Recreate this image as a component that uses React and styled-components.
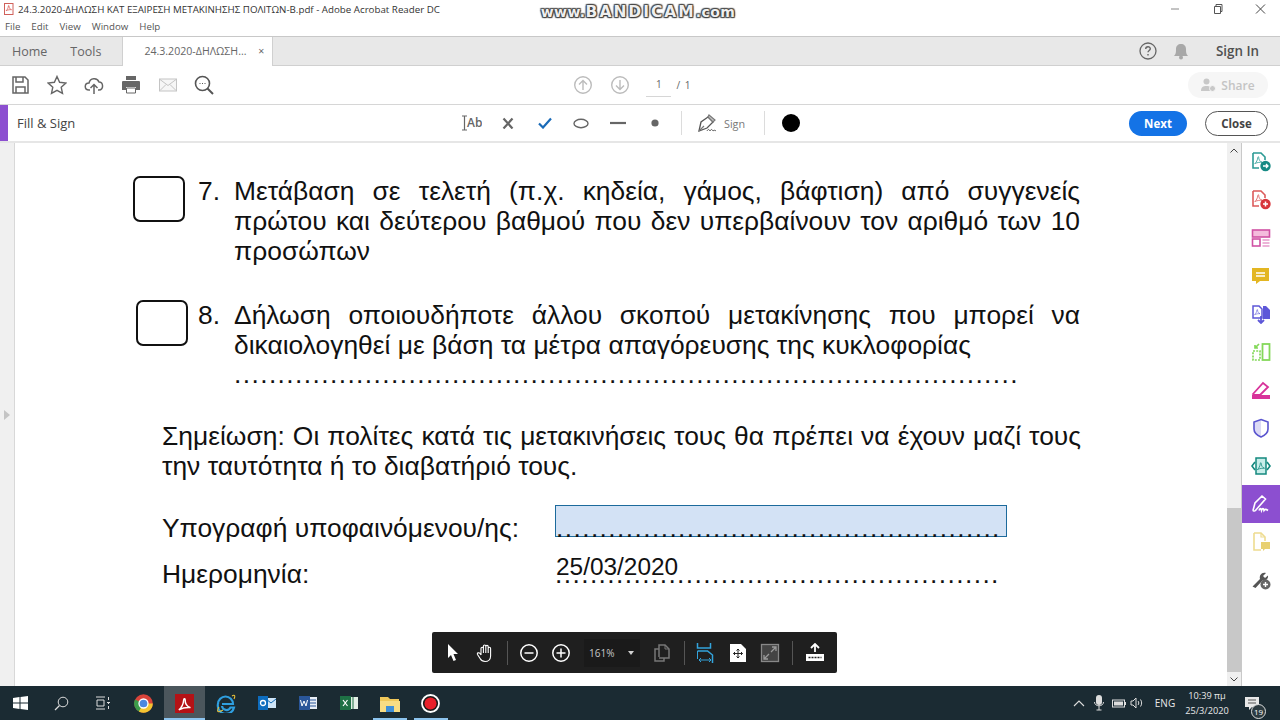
import React from 'react';
import styled, { createGlobalStyle } from 'styled-components';

const GlobalStyle = createGlobalStyle`
  html, body { margin: 0; padding: 0; height: 100%; overflow: hidden; background: #fff; }
  #root { height: 720px; }
  * { box-sizing: border-box; }
  svg { display: block; }
`;

const uiFont = `"Open Sans", "Noto Sans", sans-serif`;
const docFont = `"Liberation Sans", Arial, sans-serif`;

const Screen = styled.div`
  position: relative;
  width: 1280px;
  height: 720px;
  display: flex;
  flex-direction: column;
  overflow: hidden;
  font-family: ${uiFont};
  color: #444;
`;

/* title + menu */
const TitleBar = styled.div`
  height: 18px;
  display: flex;
  align-items: center;
  padding-left: 4px;
  gap: 4px;
  font-size: 9.75px;
  color: #333;
`;
const TitleText = styled.span`
  flex: 1;
  white-space: nowrap;
`;
const WinBtn = styled.div`
  width: 39px;
  display: flex;
  justify-content: center;
`;
const MenuBar = styled.div`
  height: 19px;
  display: flex;
  align-items: center;
  gap: 11px;
  padding: 0 0 1px 5px;
  font-size: 9.7px;
  color: #555;
  border-bottom: 1px solid #c8c8c8;
`;

/* tabs */
const TabBar = styled.div`
  height: 29px;
  display: flex;
  align-items: center;
  background: #e8e8e8;
  border-bottom: 1px solid #d0d0d0;
  font-size: 12.5px;
  color: #666;
`;
const NavTab = styled.span`
  margin-left: ${(p) => p.$ml}px;
`;
const DocTab = styled.div`
  width: 151px;
  height: 29px;
  margin-left: 21px;
  padding: 0 8px 0 21px;
  display: flex;
  align-items: center;
  justify-content: space-between;
  background: #fff;
  border-left: 1px solid #d0d0d0;
  border-right: 1px solid #d0d0d0;
  font-size: 10.6px;
  white-space: nowrap;
  color: #666;
`;
const TabRight = styled.div`
  margin-left: auto;
  display: flex;
  align-items: center;
  padding-right: 21px;
  gap: 16px;
`;
const SignIn = styled.span`
  margin-left: 11px;
  font-size: 13.4px;
  font-weight: 600;
  color: #505050;
`;

/* main toolbar */
const ToolBar = styled.div`
  height: 39px;
  display: flex;
  align-items: center;
  padding-left: 2px;
  border-bottom: 1px solid #d6d6d6;
`;
const ToolCell = styled.div`
  width: ${(p) => p.$w || 36.8}px;
  margin-left: ${(p) => p.$ml || 0}px;
  display: flex;
  justify-content: center;
`;
const PageBox = styled.div`
  width: 25px;
  margin-left: 8px;
  height: 23px;
  line-height: 21px;
  text-align: center;
  font-size: 10px;
  color: #666;
  border-bottom: 1px solid #d6d6d6;
`;
const PageTotal = styled.span`
  margin-left: 5px;
  font-size: 10px;
  word-spacing: 2px;
  color: #666;
`;
const ShareBtn = styled.div`
  margin-left: auto;
  margin-right: 12px;
  width: 80px;
  height: 26px;
  border-radius: 13px;
  background: #f6f6f6;
  display: flex;
  align-items: center;
  justify-content: center;
  gap: 5px;
  font-size: 12px;
  font-weight: 600;
  color: #c4c4c4;
`;

/* fill and sign */
const FillBar = styled.div`
  height: 38px;
  display: flex;
  align-items: center;
  border-bottom: 2px solid #e6e6e6;
  box-shadow: inset 8px 0 0 #8c4fd0;
`;
const FillTitle = styled.span`
  width: 443px;
  padding-left: 17px;
  font-size: 13px;
  font-weight: 500;
  color: #444;
`;
const Divider = styled.div`
  width: 1px;
  height: 24px;
  margin: 0 ${(p) => p.$gap || 0}px;
  background: ${(p) => p.$color || '#dcdcdc'};
`;
const SignLabel = styled.span`
  width: 40px;
  font-size: 10.8px;
  color: #777;
`;
const ColorDot = styled.div`
  width: 18px;
  height: 18px;
  margin-left: 17px;
  border-radius: 50%;
  background: #000;
`;
const PillBtn = styled.div`
  height: 25px;
  display: flex;
  align-items: center;
  justify-content: center;
  border-radius: 13px;
  font-size: 11.5px;
  font-weight: 700;
`;
const NextBtn = styled(PillBtn)`
  width: 58px;
  margin-left: auto;
  background: #1473e6;
  color: #fff;
`;
const CloseBtn = styled(PillBtn)`
  width: 63px;
  margin: 0 12px 0 18px;
  border: 1px solid #555;
  color: #444;
`;

/* body */
const Body = styled.div`
  flex: 1;
  min-height: 0;
  display: flex;
`;
const SideStrip = styled.div`
  width: 15px;
  display: flex;
  align-items: center;
  padding: 0 0 0 4px;
  background: #f0f0f0;
  border-right: 1px solid #d8d8d8;
`;
const Page = styled.div`
  flex: 1;
  padding: 33px 0 0 118px;
  background: #fff;
  font-family: ${docFont};
  color: #111;
  font-size: 26.4px;
  line-height: 30px;
`;
const Item = styled.div`
  display: grid;
  grid-template-columns: 65px 36px 846px;
  margin-bottom: ${(p) => p.$mb}px;
`;
const CheckBox = styled.div`
  width: 52px;
  height: ${(p) => p.$h}px;
  margin-left: ${(p) => p.$ml || 0}px;
  border: 2px solid #111;
  border-radius: 7px;
`;
const Justified = styled.div`
  text-align: justify;
`;
const Dots = styled.div`
  height: ${(p) => p.$h}px;
  width: ${(p) => p.$w}px;
  margin-top: ${(p) => p.$mt || 0}px;
  white-space: nowrap;
  letter-spacing: 1.39px;
  line-height: ${(p) => p.$lh}px;
  color: #111;
`;
const Note = styled.div`
  width: 919px;
  margin: 21px 0 0 29px;
  text-align: justify;
`;
const SignRow = styled.div`
  display: grid;
  grid-template-columns: 393px 452px;
  margin: 24px 0 0 29px;
  align-items: start;
`;
const DateRow = styled(SignRow)`
  margin-top: 11px;
  align-items: end;
`;
const RowLabel = styled.div`
  padding-top: ${(p) => p.$pt || 0}px;
  white-space: nowrap;
`;
const SignField = styled.div`
  height: 32px;
  display: flex;
  align-items: flex-end;
  background: #d3e2f5;
  border: 1px solid #1c6a9c;
`;
const DateField = styled.div`
  padding-left: 1px;
  line-height: 26px;
  font-size: 24.4px;
`;

/* scrollbar */
const ScrollBar = styled.div`
  width: 15px;
  display: flex;
  flex-direction: column;
  align-items: center;
  background: #f0f0f0;
  border-right: 1px solid #c9c9c9;
`;
const ScrollArrow = styled.div`
  height: 14px;
  display: flex;
  align-items: center;
`;
const ScrollTrack = styled.div`
  flex: 1;
  width: 100%;
  padding-top: 351px;
  display: flex;
`;
const ScrollThumb = styled.div`
  flex: 1;
  background: #c8c8c8;
`;

/* right rail */
const Rail = styled.div`
  width: 38px;
  display: flex;
  flex-direction: column;
  background: #fff;
`;
const RailItem = styled.div`
  height: 38px;
  display: flex;
  align-items: center;
  justify-content: center;
  background: ${(p) => (p.$active ? '#8c4fd0' : 'transparent')};
`;

/* floating page controls */
const FloatBar = styled.div`
  position: absolute;
  left: 432px;
  top: 632px;
  width: 405px;
  height: 41px;
  display: flex;
  align-items: center;
  padding-left: 5px;
  background: #1f1f1f;
  border-radius: 2px;
`;
const FloatCell = styled.div`
  width: 32px;
  display: flex;
  justify-content: center;
`;
const ZoomValue = styled.div`
  width: 56px;
  margin: 0 6px 0 7px;
  height: 28px;
  display: flex;
  align-items: center;
  justify-content: space-between;
  padding: 0 6px 0 5px;
  background: #1a1a1a;
  font-size: 10px;
  color: #c8c8c8;
`;
const Caret = styled.div`
  width: 0;
  height: 0;
  border-left: 3px solid transparent;
  border-right: 3px solid transparent;
  border-top: 4px solid #d0d0d0;
`;

/* watermark */
const Watermark = styled.div`
  position: absolute;
  left: 530px;
  top: 2px;
  width: 216px;
  text-align: center;
  font-family: "DejaVu Sans", sans-serif;
  font-size: 15.5px;
  line-height: 21px;
  font-weight: 700;
  letter-spacing: 2px;
  white-space: nowrap;
  color: #efefef;
  text-shadow: 0 0 1px #333, 0 0 2px #333, 1px 1px 1px #444, -1px -1px 1px #555, 1px -1px 1px #555, -1px 1px 1px #555;
`;
const WatermarkSmall = styled.span`
  font-size: 14px;
  letter-spacing: 0.4px;
`;

/* taskbar */
const TaskBar = styled.div`
  height: 34px;
  display: flex;
  align-items: stretch;
  background: #1b2b33;
  color: #e8e8e8;
`;
const TaskCell = styled.div`
  width: 41px;
  display: flex;
  align-items: center;
  justify-content: center;
  background-color: ${(p) => (p.$active ? '#4b565c' : 'transparent')};
  background-image: ${(p) => (p.$open ? 'linear-gradient(#8cc4ee, #8cc4ee)' : 'none')};
  background-repeat: no-repeat;
  background-position: center bottom;
  background-size: ${(p) => p.$open || 0}px 2px;
`;
const Tray = styled.div`
  margin-left: auto;
  display: flex;
  align-items: center;
`;
const TrayCell = styled.div`
  width: ${(p) => p.$w}px;
  padding-left: ${(p) => p.$pl || 0}px;
  display: flex;
  justify-content: center;
  font-size: ${(p) => p.$fs || 10}px;
`;
const Clock = styled.div`
  width: 58px;
  text-align: center;
  font-size: 9.2px;
  line-height: 15px;
  white-space: nowrap;
`;
const NotifyWrap = styled.div`
  position: relative;
  width: 44px;
  padding-left: 9px;
`;
const NotifyBadge = styled.div`
  position: absolute;
  left: 15px;
  top: 7px;
  width: 15px;
  height: 15px;
  border-radius: 50%;
  background: #2c3a40;
  border: 1px solid #ddd;
  text-align: center;
  font-size: 8px;
  line-height: 13px;
  color: #fff;
`;

const PdfGlyph = ({ x = 0, y = 0, s = 1, color = '#fff', w = 1 }) => (
  <path
    transform={`translate(${x} ${y}) scale(${s})`}
    d="M1 9.500C3 8 4.500 5 4.800 1.600 5 .6 5.900 .7 5.900 1.700 5.800 4.500 7.500 7 10 7.800 8 7.600 4 8 1 9.500Z"
    fill="none"
    stroke={color}
    strokeWidth={w}
  />
);

const Svg = ({ w = 20, h = 20, vb, children }) => (
  <svg width={w} height={h} viewBox={vb || `0 0 ${w} ${h}`} fill="none">
    {children}
  </svg>
);

const RAIL_ICONS = [
  <Svg key="export">
    <path d="M2 1h8l4 4v3M2 1v15h6" stroke="#2b9a94" strokeWidth="1.600" />
    <PdfGlyph x={3} y={4} s={0.8} color="#2b9a94" />
    <circle cx="14.500" cy="14" r="5.200" fill="#168a84" />
    <path d="M12 14h5M15 12l2 2-2 2" stroke="#fff" strokeWidth="1.300" />
  </Svg>,
  <Svg key="create">
    <path d="M2 1h8l4 4v3M2 1v15h6" stroke="#dc5a5a" strokeWidth="1.600" />
    <PdfGlyph x={3} y={4} s={0.8} color="#dc5a5a" />
    <circle cx="14.500" cy="14" r="5.200" fill="#d8353b" />
    <path d="M12 14h5M14.500 11.500v5" stroke="#fff" strokeWidth="1.500" />
  </Svg>,
  <Svg key="edit">
    <rect x="1.500" y="2" width="17" height="7" fill="#f4bcdc" stroke="#d052a4" strokeWidth="1.600" />
    <rect x="1.500" y="11" width="7.500" height="7" stroke="#d052a4" strokeWidth="1.600" />
    <path d="M11.500 12h7M11.500 15h7M11.500 18h7" stroke="#e79acb" strokeWidth="1.300" />
  </Svg>,
  <Svg key="comment">
    <path d="M1 2h17v13H9l-4 3v-3H1z" fill="#e3b622" />
    <path d="M5 7h9M5 10h9" stroke="#fff" strokeWidth="1.400" />
  </Svg>,
  <Svg key="combine">
    <path d="M2 2h6l3 3v9H2z" fill="#fff" stroke="#5d57d8" strokeWidth="1.500" />
    <path d="M12 2h3l4 4v9h-7z" fill="#5d57d8" />
    <PdfGlyph x={3} y={5} s={0.6} color="#5d57d8" />
    <path d="M10 12v7M7 16l3 3 3-3" stroke="#5d57d8" strokeWidth="1.800" />
  </Svg>,
  <Svg key="organize">
    <rect x="11.500" y="2" width="7" height="16" stroke="#84d85a" strokeWidth="1.800" />
    <path d="M2 9h7v9H2z" stroke="#84d85a" strokeWidth="1.700" strokeDasharray="2 1.200" />
    <path d="M8 2L4 6M4 3v3h3" stroke="#84d85a" strokeWidth="1.700" />
  </Svg>,
  <Svg key="redact">
    <path d="M2 14L12 3l5 4-8 8H3z" fill="#fff" stroke="#d8329a" strokeWidth="1.800" />
    <rect x="1" y="15" width="18" height="4" fill="#d8329a" />
  </Svg>,
  <Svg key="protect">
    <path d="M10 2v17c-3.500-1.500-7-4-7-8V4z" fill="#dcdaf5" />
    <path d="M10 1.500l7 2.500v7c0 4-3.500 6.500-7 8-3.500-1.500-7-4-7-8V4z" stroke="#5a55cf" strokeWidth="1.600" />
  </Svg>,
  <Svg key="compress">
    <path d="M5 2h10v16H5z" fill="#c8eeea" stroke="#14897f" strokeWidth="1.500" />
    <path d="M4 6l-3 4 3 4M16 6l3 4-3 4" stroke="#14897f" strokeWidth="1.600" />
    <PdfGlyph x={5.500} y={6} s={0.8} color="#14897f" />
  </Svg>,
  <Svg key="sign">
    <path d="M2 16.500L4 9l7-7 3.500 3-7 8-3 3.500c-1 1-2.500 .5-2.500-.5z" stroke="#fff" strokeWidth="1.600" />
    <path d="M8 16.500c1-2.500 2-2.500 2.500 0 1-2.500 2-2.500 2.500 0 1-1.500 2-1.500 4 0" stroke="#fff" strokeWidth="1.600" />
  </Svg>,
  <Svg key="review">
    <path d="M3 1h7l4 4v4M3 1v17h7" stroke="#eedc90" strokeWidth="1.600" />
    <path d="M10 1v4h4" stroke="#eedc90" strokeWidth="1.200" />
    <path d="M10 10h9v7h-5l-2 2v-2h-2z" fill="#e8d070" />
  </Svg>,
  <Svg key="more">
    <path d="M1.500 16.500L9 9c-1-4 2-7.500 6-6l-3 3 2 2 3-2.500c.5 3-2 6-5.500 5l-7 7.500z" fill="#555" />
    <circle cx="14.500" cy="14.500" r="5" fill="#666" />
    <path d="M12 14.500h5M14.500 12v5" stroke="#fff" strokeWidth="1.400" />
  </Svg>,
];

const App = () => (
  <Screen>
    <GlobalStyle />
    <TitleBar>
      <Svg w={10} h={12}>
        <rect x=".5" y=".5" width="8.500" height="11" fill="#fff" stroke="#d0605a" />
        <PdfGlyph x={1.500} y={2} s={0.6} color="#d0302a" />
      </Svg>
      <TitleText>24.3.2020-ΔΗΛΩΣΗ ΚΑΤ ΕΞΑΙΡΕΣΗ ΜΕΤΑΚΙΝΗΣΗΣ ΠΟΛΙΤΩΝ-Β.pdf - Adobe Acrobat Reader DC</TitleText>
      <WinBtn><Svg w={10} h={10}><path d="M1 5h8" stroke="#888" /></Svg></WinBtn>
      <WinBtn><Svg w={10} h={10}><path d="M1.500 2.500h6v7h-6zM3 2.500v-2h6v7H7.500" stroke="#555" /></Svg></WinBtn>
      <WinBtn><Svg w={11} h={10}><path d="M1 .5l9 9M10 .5l-9 9" stroke="#444" /></Svg></WinBtn>
    </TitleBar>
    <MenuBar>
      <span>File</span><span>Edit</span><span>View</span><span>Window</span><span>Help</span>
    </MenuBar>

    <TabBar>
      <NavTab $ml={12}>Home</NavTab>
      <NavTab $ml={23}>Tools</NavTab>
      <DocTab>
        <span>24.3.2020-ΔΗΛΩΣΗ...</span>
        <span>×</span>
      </DocTab>
      <TabRight>
        <Svg w={18} h={18}>
          <circle cx="9" cy="9" r="8" stroke="#666" strokeWidth="1.300" />
          <path d="M6.700 7c0-3 4.600-3 4.600-.2 0 1.700-2.300 1.700-2.300 3.500M9 12v1.500" stroke="#666" strokeWidth="1.400" />
        </Svg>
        <Svg w={16} h={18}>
          <path d="M1 14c2-2 2-4 2-7 0-3 2-5 5-5s5 2 5 5c0 3 0 5 2 7z" fill="#a8a8a8" />
          <circle cx="8" cy="15.500" r="2" fill="#a8a8a8" />
        </Svg>
        <SignIn>Sign In</SignIn>
      </TabRight>
    </TabBar>

    <ToolBar>
      <ToolCell>
        <Svg>
          <path d="M3 2h12l3 3v13H3z" stroke="#666" strokeWidth="1.500" />
          <path d="M6 2v5h7V2M6 18v-6h9v6" stroke="#666" strokeWidth="1.500" />
        </Svg>
      </ToolCell>
      <ToolCell>
        <Svg>
          <path d="M10 1.500l2.600 5.800 6.300.7-4.700 4.200 1.300 6.200L10 15.300l-5.500 3.100 1.300-6.200L1.100 8l6.300-.7z" stroke="#666" strokeWidth="1.400" />
        </Svg>
      </ToolCell>
      <ToolCell>
        <Svg>
          <path d="M6 15H5c-5 0-5-7 0-7 1-5 8-6 10-1 4.500 0 5 8 0 8h-1" stroke="#666" strokeWidth="1.500" />
          <path d="M10 19v-9M6.500 13L10 9.500l3.500 3.500" stroke="#666" strokeWidth="1.500" />
        </Svg>
      </ToolCell>
      <ToolCell>
        <Svg>
          <path d="M5 1h10v4H5z" fill="#666" />
          <path d="M2 6h16c1 0 1 1 1 1v8h-4v-3H5v3H1V7s0-1 1-1z" fill="#666" />
          <path d="M5.500 13h9v5h-9z" stroke="#666" />
        </Svg>
      </ToolCell>
      <ToolCell>
        <Svg>
          <rect x="1.500" y="4" width="17" height="12" fill="#f6f6f6" stroke="#c4c4c4" />
          <path d="M2 4.500l8 6 8-6M2 15.500l6-6M18 15.500l-6-6" stroke="#c4c4c4" />
        </Svg>
      </ToolCell>
      <ToolCell>
        <Svg>
          <circle cx="8.500" cy="8.500" r="7" stroke="#555" strokeWidth="1.600" />
          <path d="M13.500 13.500l5.500 5.500" stroke="#555" strokeWidth="2" />
          <path d="M5.500 8.500h1M8 8.500h1M10.500 8.500h1" stroke="#555" />
        </Svg>
      </ToolCell>

      <ToolCell $ml={342}>
        <Svg>
          <circle cx="10" cy="10" r="8.300" stroke="#bcbcbc" strokeWidth="1.400" />
          <path d="M10 15V5.500M6 9.500l4-4 4 4" stroke="#bcbcbc" strokeWidth="1.400" />
        </Svg>
      </ToolCell>
      <ToolCell>
        <Svg>
          <circle cx="10" cy="10" r="8.300" stroke="#bcbcbc" strokeWidth="1.400" />
          <path d="M10 5v9.500M6 10.500l4 4 4-4" stroke="#bcbcbc" strokeWidth="1.400" />
        </Svg>
      </ToolCell>
      <PageBox>1</PageBox>
      <PageTotal>/ 1</PageTotal>
      <ShareBtn>
        <Svg w={15} h={14}>
          <circle cx="5.500" cy="3.500" r="3" fill="#c8c8c8" />
          <path d="M0 13c0-4 2-5 5.500-5S10 9 10 13z" fill="#c8c8c8" />
          <circle cx="11.500" cy="10.500" r="3" fill="#c8c8c8" stroke="#f6f6f6" />
        </Svg>
        Share
      </ShareBtn>
    </ToolBar>

    <FillBar>
      <FillTitle>Fill &amp; Sign</FillTitle>
      <ToolCell $w={37} $ml={10}>
        <Svg w={21} h={16}>
          <path d="M1 1h5M1 15h5M3.500 1v14" stroke="#666" strokeWidth="1.200" />
          <text x="6" y="12" fontSize="12" fontWeight="600" fill="#666" fontFamily="Open Sans">Ab</text>
        </Svg>
      </ToolCell>
      <ToolCell $w={36.600}>
        <Svg w={12} h={12}><path d="M1.500 1.500l9 10M10.500 1.500l-9 10" stroke="#666" strokeWidth="2.200" /></Svg>
      </ToolCell>
      <ToolCell $w={36.600}>
        <Svg w={14} h={12}><path d="M1 6.500l4 4L13 1.500" stroke="#1a6bb8" strokeWidth="2.200" /></Svg>
      </ToolCell>
      <ToolCell $w={36.600}>
        <Svg w={16} h={11}><ellipse cx="8" cy="5.500" rx="7" ry="4.200" stroke="#666" strokeWidth="1.400" /></Svg>
      </ToolCell>
      <ToolCell $w={36.600}>
        <Svg w={16} h={4}><path d="M0 2h16" stroke="#666" strokeWidth="2.200" /></Svg>
      </ToolCell>
      <ToolCell $w={36.600}>
        <Svg w={8} h={8}><circle cx="4" cy="4" r="3.600" fill="#666" /></Svg>
      </ToolCell>
      <Divider $gap={8} />
      <ToolCell $w={34}>
        <Svg>
          <path d="M2 18l2-9 7-5 5 5-6 6z" stroke="#555" strokeWidth="1.300" />
          <path d="M2 18l5-5M12 2l6 5-2 2-5-5z" stroke="#777" strokeWidth="1.200" fill="#c4c4c4" />
          <path d="M10 18c1-2 2-2 3 0 1-2 2-2 3 0 1-1 2-1 3 0" stroke="#555" />
        </Svg>
      </ToolCell>
      <SignLabel>Sign</SignLabel>
      <Divider />
      <ColorDot />
      <NextBtn>Next</NextBtn>
      <CloseBtn>Close</CloseBtn>
    </FillBar>

    <Body>
      <SideStrip>
        <Svg w={6} h={10}><path d="M0 0l6 5-6 5z" fill="#c4c4c4" /></Svg>
      </SideStrip>
      <Page>
        <Item $mb={34}>
          <CheckBox $h={46} />
          <span>7.</span>
          <Justified>
            Μετάβαση σε τελετή (π.χ. κηδεία, γάμος, βάφτιση) από συγγενείς πρώτου και δεύτερου βαθμού που δεν υπερβαίνουν τον αριθμό των 10 προσώπων
          </Justified>
        </Item>
        <Item $mb={0}>
          <CheckBox $h={46} $ml={3} />
          <span>8.</span>
          <div>
            <Justified>
              Δήλωση οποιουδήποτε άλλου σκοπού μετακίνησης που μπορεί να δικαιολογηθεί με βάση τα μέτρα απαγόρευσης της κυκλοφορίας
            </Justified>
            <Dots $w={790} $h={40} $lh={28}>{'.'.repeat(90)}</Dots>
          </div>
        </Item>
        <Note>
          Σημείωση: Οι πολίτες κατά τις μετακινήσεις τους θα πρέπει να έχουν μαζί τους την ταυτότητα ή το διαβατήριό τους.
        </Note>
        <SignRow>
          <RowLabel $pt={8}>Υπογραφή υποφαινόμενου/ης:</RowLabel>
          <SignField>
            <Dots $w={450} $h={14} $lh={12}>{'.'.repeat(51)}</Dots>
          </SignField>
        </SignRow>
        <DateRow>
          <RowLabel>Ημερομηνία:</RowLabel>
          <div>
            <DateField>25/03/2020</DateField>
            <Dots $w={450} $h={15} $lh={0} $mt={-6}>{'.'.repeat(51)}</Dots>
          </div>
        </DateRow>
      </Page>
      <ScrollBar>
        <ScrollArrow><Svg w={8} h={5}><path d="M.5 4.500L4 1l3.500 3.500" stroke="#444" /></Svg></ScrollArrow>
        <ScrollTrack><ScrollThumb /></ScrollTrack>
        <ScrollArrow><Svg w={8} h={5}><path d="M.5 .5L4 4l3.500-3.500" stroke="#444" /></Svg></ScrollArrow>
      </ScrollBar>
      <Rail>
        {RAIL_ICONS.map((icon) => (
          <RailItem key={icon.key} $active={icon.key === 'sign'}>{icon}</RailItem>
        ))}
      </Rail>
    </Body>

    <TaskBar>
      <TaskCell>
        <Svg w={15} h={14}>
          <path d="M0 2l6.500-1v5.500H0zM7.500 .9L15 0v6.500H7.500zM0 7.500h6.500V13L0 12zM7.500 7.500H15V14l-7.500-1z" fill="#fff" />
        </Svg>
      </TaskCell>
      <TaskCell>
        <Svg w={15} h={15}>
          <circle cx="9" cy="6" r="4.800" stroke="#ddd" />
          <path d="M5.500 9.500L1 14" stroke="#ddd" strokeWidth="1.200" />
        </Svg>
      </TaskCell>
      <TaskCell>
        <Svg w={16} h={14}>
          <path d="M1 1h9M1 13h9M2 4h7v6H2z" stroke="#ddd" />
          <path d="M13.500 1v3M13.500 6v2M13.500 10v3M12 6.500h3" stroke="#ddd" />
        </Svg>
      </TaskCell>
      <TaskCell>
        <Svg w={19} h={19}>
          <circle cx="9.500" cy="9.500" r="9.300" fill="#d9433a" />
          <path d="M9.500 9.500L1 5.500a9.300 9.300 0 0 0 5 12.600z" fill="#3b9c4a" />
          <path d="M9.500 9.500h9.300a9.300 9.300 0 0 1-14 8z" fill="#f3c530" />
          <circle cx="9.500" cy="9.500" r="4.500" fill="#4a88e0" stroke="#fff" strokeWidth="1.300" />
        </Svg>
      </TaskCell>
      <TaskCell $active $open={41}>
        <Svg w={19} h={19}>
          <rect width="19" height="19" fill="#b41216" />
          <PdfGlyph x={2.500} y={3.500} s={1.300} color="#fff" w={1.100} />
        </Svg>
      </TaskCell>
      <TaskCell>
        <Svg w={20} h={20}>
          <path d="M2 11a7.500 7.500 0 0 1 15 0H6M6 13a4.500 4.500 0 0 0 8.500 1.500H18A8 8 0 0 1 2 11" stroke="#2f9fe0" strokeWidth="2.200" />
          <path d="M16 3c3-2 3.500 0 2 3M3 14c-3 5-1 6 4 3" stroke="#e8c23a" strokeWidth="1.100" />
        </Svg>
      </TaskCell>
      <TaskCell>
        <Svg w={18} h={16}>
          <rect x="8" y="3" width="10" height="10" fill="#cfe5f8" />
          <path d="M8 4l5 4 5-4" stroke="#1069b4" />
          <rect y="1" width="10" height="14" fill="#0d6cbe" />
          <circle cx="5" cy="8" r="2.500" stroke="#fff" strokeWidth="1.300" />
        </Svg>
      </TaskCell>
      <TaskCell>
        <Svg w={18} h={16}>
          <rect x="8" y="2" width="10" height="12" fill="#e8eef6" />
          <path d="M11 5h6M11 8h6M11 11h6" stroke="#2a5699" />
          <rect y="1" width="11" height="14" fill="#2a5699" />
          <path d="M1.500 5l1.500 6 2-5 2 5 1.500-6" stroke="#fff" />
        </Svg>
      </TaskCell>
      <TaskCell>
        <Svg w={18} h={16}>
          <rect x="8" y="2" width="10" height="12" fill="#e3f0e6" />
          <path d="M13 2v12" stroke="#1e7145" />
          <rect y="1" width="11" height="14" fill="#1e7145" />
          <path d="M3 5l4.500 6M7.500 5L3 11" stroke="#fff" strokeWidth="1.200" />
        </Svg>
      </TaskCell>
      <TaskCell $open={34}>
        <Svg w={20} h={17}>
          <path d="M0 2h8l2 2h9v12H0z" fill="#f0c85a" />
          <rect y="6" width="20" height="11" fill="#f8dc84" />
          <rect x="6" y="11" width="8" height="6" fill="#3f8fd8" />
        </Svg>
      </TaskCell>
      <TaskCell $open={34}>
        <Svg w={19} h={19}>
          <circle cx="9.500" cy="9.500" r="8.500" fill="#1a1a1a" stroke="#fff" strokeWidth="1.800" />
          <circle cx="9.500" cy="9.500" r="6" fill="#e8202a" />
        </Svg>
      </TaskCell>
      <Tray>
        <TrayCell $w={20}><Svg w={12} h={7}><path d="M1 6l5-5 5 5" stroke="#ddd" strokeWidth="1.100" /></Svg></TrayCell>
        <TrayCell $w={20}>
          <Svg w={10} h={16}>
            <rect x="2" y="0" width="6" height="10" rx="3" fill="#ddd" />
            <path d="M.5 7c0 5 9 5 9 0M5 11v4M2.500 15h5" stroke="#ddd" />
          </Svg>
        </TrayCell>
        <TrayCell $w={20}>
          <Svg w={14} h={9}>
            <rect x=".5" y="1" width="12" height="7" stroke="#ddd" />
            <rect x="2" y="2.500" width="9" height="4" fill="#ddd" />
            <path d="M13.500 3v3" stroke="#ddd" />
          </Svg>
        </TrayCell>
        <TrayCell $w={16}>
          <Svg w={14} h={12}>
            <path d="M1 4h2l3-3v10L3 8H1z" stroke="#ddd" />
            <path d="M8 4c1 1 1 3 0 4M10.500 2.500c1.500 2 1.500 5 0 7" stroke="#ddd" />
          </Svg>
        </TrayCell>
        <TrayCell $w={33} $pl={7} $fs={10}>ENG</TrayCell>
        <Clock>10:39 πμ<br />25/3/2020</Clock>
        <NotifyWrap>
          <Svg w={14} h={13}>
            <path d="M0 0h14v10H7l-3 3v-3H0z" fill="#e8e8e8" />
            <path d="M3 3h8M3 6h8" stroke="#555" />
          </Svg>
          <NotifyBadge>19</NotifyBadge>
        </NotifyWrap>
      </Tray>
    </TaskBar>

    <FloatBar>
      <FloatCell>
        <Svg w={14} h={19}><path d="M2 1l10 10H7.500l2.500 6-2.500 1-2.500-6-3 3z" fill="#fff" /></Svg>
      </FloatCell>
      <FloatCell>
        <Svg>
          <path
            d="M6 12V5.500a1.200 1.200 0 0 1 2.400 0V10M8.400 10V3.200a1.200 1.200 0 0 1 2.400 0V10M10.800 10V3.600a1.200 1.200 0 0 1 2.400 0V10M13.200 10V5.500a1.200 1.200 0 0 1 2.400 0V13c0 3.500-2.500 5.500-5.500 5.500-2.500 0-4-1-5-3L2.500 11.500c-.8-1.500 1.500-2.500 2.500-1L6 12"
            stroke="#fff"
            strokeWidth="1.100"
          />
        </Svg>
      </FloatCell>
      <Divider $gap={5.500} $color="#555" />
      <FloatCell>
        <Svg><circle cx="10" cy="10" r="8.200" stroke="#fff" strokeWidth="1.500" /><path d="M5.500 10h9" stroke="#fff" strokeWidth="1.500" /></Svg>
      </FloatCell>
      <FloatCell>
        <Svg><circle cx="10" cy="10" r="8.200" stroke="#fff" strokeWidth="1.500" /><path d="M5.500 10h9M10 5.500v9" stroke="#fff" strokeWidth="1.500" /></Svg>
      </FloatCell>
      <ZoomValue>161%<Caret /></ZoomValue>
      <FloatCell>
        <Svg>
          <path d="M7 14V2h6l4 4v9H7" stroke="#777" strokeWidth="1.500" />
          <path d="M7 6H3v12h9v-3" stroke="#777" strokeWidth="1.500" />
          <path d="M13 2v4h4" stroke="#777" />
        </Svg>
      </FloatCell>
      <Divider $gap={5.500} $color="#555" />
      <FloatCell>
        <Svg>
          <path d="M1.500 0v5h13V0M1.500 8h10l5 4v8" stroke="#33a4dc" strokeWidth="1.500" />
          <path d="M1.500 8v8M3 17h12M3 17l2-2M3 17l2 2M15 17l-2-2M15 17l-2 2" stroke="#33a4dc" />
        </Svg>
      </FloatCell>
      <FloatCell>
        <Svg>
          <path d="M2 1h11l5 5v13H2z" fill="#fff" />
          <path d="M10 6v9M5.500 10.500h9M8.500 7.500L10 6l1.500 1.500M8.500 13.500L10 15l1.500-1.500M7 9l-1.500 1.500L7 12M13 9l1.500 1.500L13 12" stroke="#222" />
        </Svg>
      </FloatCell>
      <FloatCell>
        <Svg>
          <rect x="1.500" y="1.500" width="17" height="17" fill="#444" stroke="#888" strokeWidth="1.300" />
          <path d="M11 9l5-5M12 4h4v4M9 11l-5 5M8 16H4v-4" stroke="#9a9a9a" strokeWidth="1.300" />
        </Svg>
      </FloatCell>
      <Divider $gap={6} $color="#555" />
      <FloatCell>
        <Svg>
          <path d="M10 1v8M6 5l4-4 4 4" stroke="#fff" strokeWidth="1.800" />
          <path d="M1 11h18v7H1z" fill="#fff" />
          <path d="M3.500 14.500h13" stroke="#222" strokeWidth="1.500" strokeDasharray="2 1" />
        </Svg>
      </FloatCell>
    </FloatBar>

    <Watermark>
      <WatermarkSmall>www.</WatermarkSmall>BANDICAM<WatermarkSmall>.com</WatermarkSmall>
    </Watermark>
  </Screen>
);

export default App;
